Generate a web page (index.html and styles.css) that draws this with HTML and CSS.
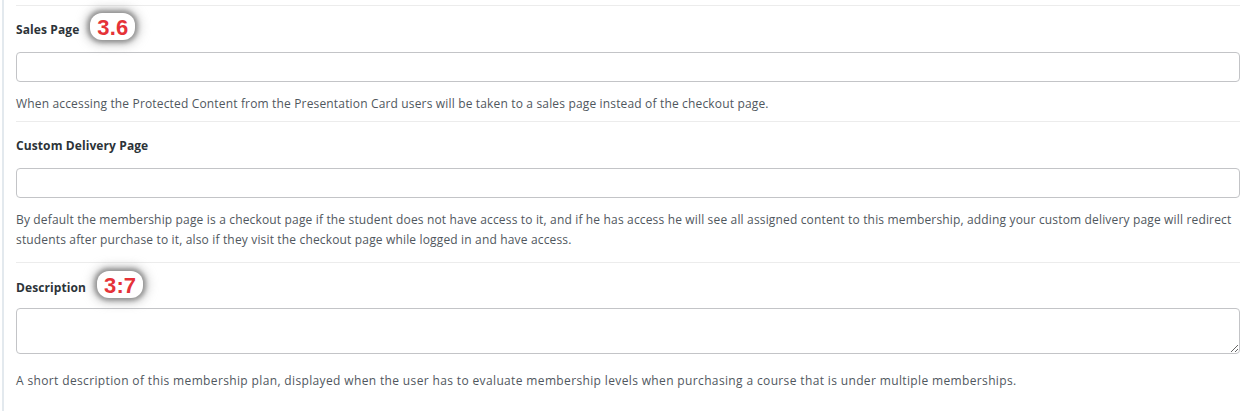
FILE: index.html
```html
<!DOCTYPE html>
<html lang="en" dir="ltr">
  <head>
    <meta charset="utf-8">
    <title>membership settings</title>
    <link rel="stylesheet" href="styles.css">
  </head>
  <body>

    <section class="panel">

      <div class="field">
        <label class="label">Sales Page <span class="badge">3.6</span></label>
        <input type="text" class="input">
        <p class="help">When accessing the Protected Content from the Presentation Card users will be taken to a sales page instead of the checkout page.</p>
      </div>

      <div class="field field-long">
        <label class="label">Custom Delivery Page</label>
        <input type="text" class="input">
        <p class="help">By default the membership page is a checkout page if the student does not have access to it, and if he has access he will see all assigned content to this membership, adding your custom delivery page will redirect students after purchase to it, also if they visit the checkout page while logged in and have access.</p>
      </div>

      <div class="field field-area">
        <label class="label">Description <span class="badge">3:7</span></label>
        <textarea class="input area" rows="2"></textarea>
        <p class="help loose">A short description of this membership plan, displayed when the user has to evaluate membership levels when purchasing a course that is under multiple memberships.</p>
      </div>

    </section>

  </body>
</html>
```

FILE: styles.css
```css
* { box-sizing: border-box; }

body {
  margin: 0;
  background-color: #fff;
  font-family: 'Open Sans', 'Noto Sans', sans-serif;
  color: #333;
}

.panel {
  margin-left: 2px;
  border-left: 2px solid #e3e9ee;
  padding: 5px 9px 0 12px;
  height: 411px;
}

.field {
  border-top: 1px solid #ececec;
  padding: 15px 0 7px 0;
  display: flex;
  flex-direction: column;
}

.field-long {
  padding-bottom: 12px;
}

.field-area {
  padding-top: 16px;
}

.label {
  position: relative;
  font-size: 12px;
  font-weight: 700;
  line-height: 18px;
  color: #2c3338;
  margin-bottom: 13px;
  align-self: flex-start;
  letter-spacing: 0.1px;
}

.field-area .label {
  margin-bottom: 11px;
}

.badge {
  position: absolute;
  left: 100%;
  top: -8px;
  margin-left: 11px;
  padding: 2px 7px 0 7px;
  background-color: #fff;
  border-radius: 12px;
  box-shadow: 0 0 4px 3px rgba(90,90,90,0.55), 0 0 10px 6px rgba(160,160,160,0.4);
  font-family: 'Liberation Sans', Arial, sans-serif;
  font-size: 22px;
  font-weight: 700;
  line-height: 25px;
  color: #e53238;
}

.input {
  display: block;
  width: 100%;
  height: 30px;
  border: 1px solid #c3c4c7;
  border-radius: 4px;
  padding: 0 8px;
  outline: none;
  font-family: inherit;
}

.area {
  height: 46px;
  resize: vertical;
}

.help {
  margin: 12px 0 0 0;
  font-size: 12px;
  line-height: 20px;
  letter-spacing: 0.16px;
  color: #50575e;
}

.area + .help {
  margin-top: 17px;
}

.help.loose {
  letter-spacing: 0.36px;
}
```
